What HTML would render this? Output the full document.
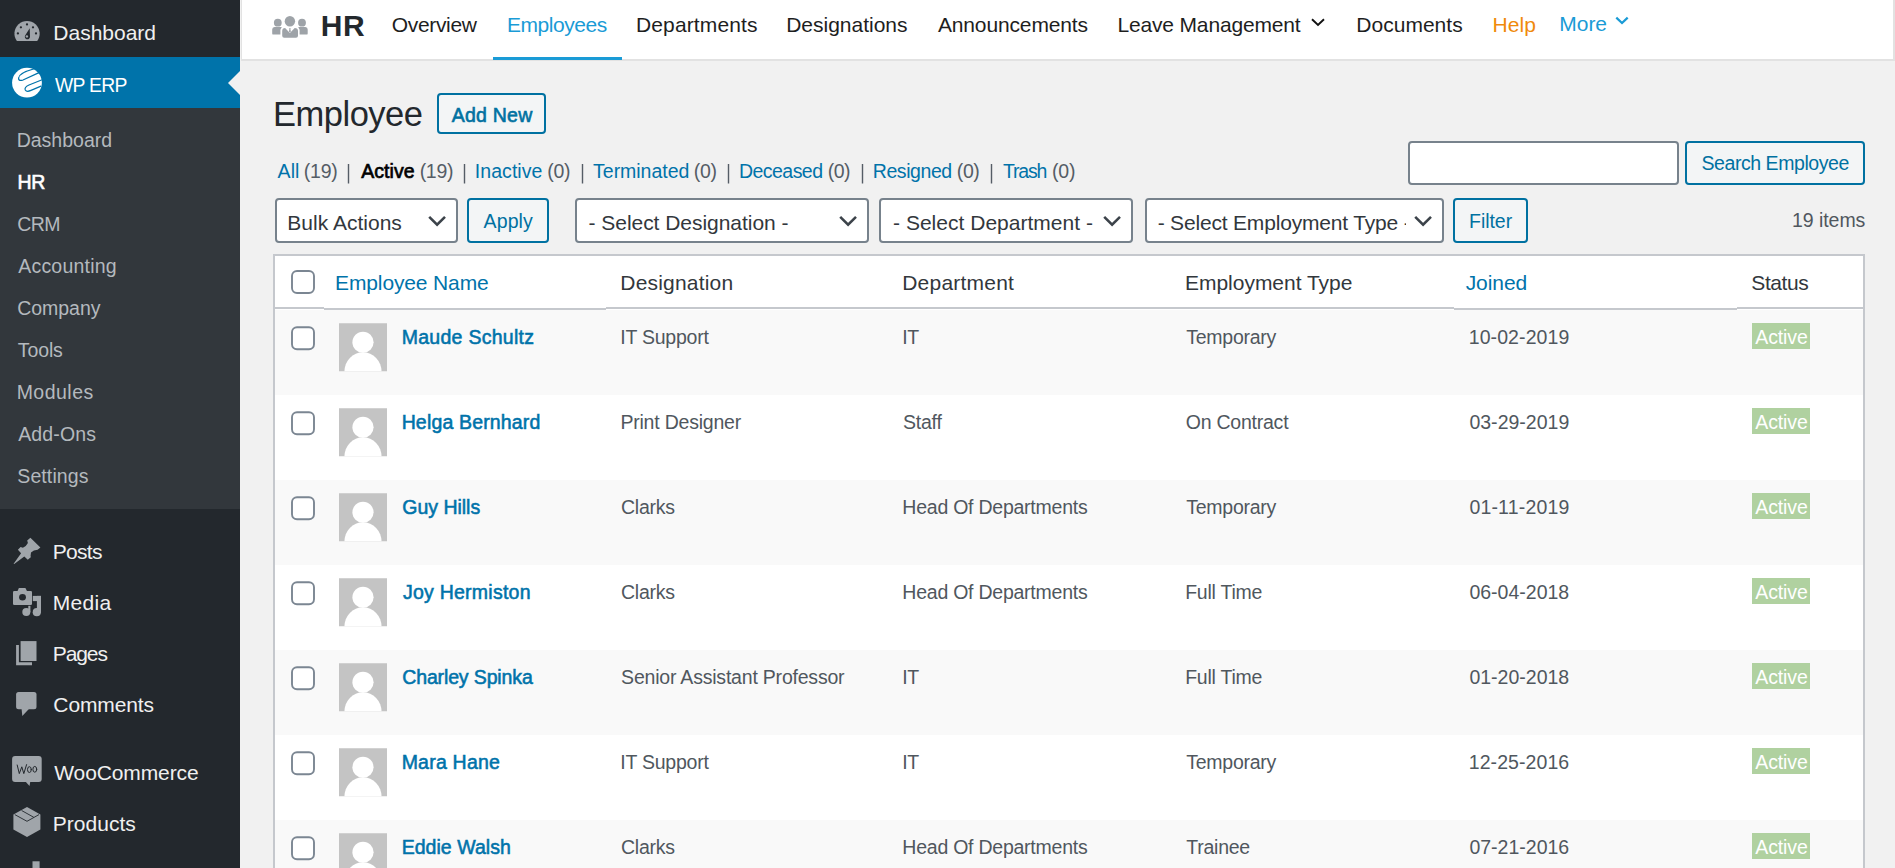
<!DOCTYPE html>
<html><head><meta charset="utf-8"><style>
html,body{margin:0;padding:0}
body{width:1895px;height:868px;position:relative;overflow:hidden;background:#f1f1f1;font-family:"Liberation Sans",sans-serif}
.b{position:absolute}
.t{position:absolute;white-space:nowrap}
svg.ov{position:absolute;left:0;top:0;pointer-events:none}
</style></head><body>
<div class="b" style="left:0px;top:0px;width:240px;height:868px;background:#23282d;"></div>
<div class="b" style="left:0px;top:57px;width:240px;height:51px;background:#0073aa;"></div>
<div class="b" style="left:0px;top:108px;width:240px;height:401px;background:#32373c;"></div>
<div class="t" style="left:53.32px;top:22.42px;font-size:21px;line-height:21px;color:#f0f0f0;letter-spacing:-0.006px;">Dashboard</div>
<div class="t" style="left:54.50px;top:73.52px;font-size:21px;line-height:21px;color:#fff;letter-spacing:-0.754px;transform:scaleX(0.92);transform-origin:0 0;">WP ERP</div>
<div class="t" style="left:16.64px;top:130.79px;font-size:19.5px;line-height:19.5px;color:#b4b9be;letter-spacing:0.009px;">Dashboard</div>
<div class="t" style="left:17.44px;top:172.79px;font-size:19.5px;line-height:19.5px;color:#fff;letter-spacing:-0.343px;-webkit-text-stroke:0.6px #fff;">HR</div>
<div class="t" style="left:17.22px;top:214.79px;font-size:19.5px;line-height:19.5px;color:#b4b9be;letter-spacing:-0.514px;">CRM</div>
<div class="t" style="left:18.20px;top:256.79px;font-size:19.5px;line-height:19.5px;color:#b4b9be;letter-spacing:0.227px;">Accounting</div>
<div class="t" style="left:17.22px;top:298.79px;font-size:19.5px;line-height:19.5px;color:#b4b9be;letter-spacing:-0.031px;">Company</div>
<div class="t" style="left:17.81px;top:340.79px;font-size:19.5px;line-height:19.5px;color:#b4b9be;letter-spacing:-0.115px;">Tools</div>
<div class="t" style="left:16.64px;top:382.79px;font-size:19.5px;line-height:19.5px;color:#b4b9be;letter-spacing:0.489px;">Modules</div>
<div class="t" style="left:18.20px;top:424.79px;font-size:19.5px;line-height:19.5px;color:#b4b9be;letter-spacing:0.159px;">Add-Ons</div>
<div class="t" style="left:17.32px;top:466.79px;font-size:19.5px;line-height:19.5px;color:#b4b9be;letter-spacing:0.095px;">Settings</div>
<div class="t" style="left:52.72px;top:540.72px;font-size:21px;line-height:21px;color:#f0f0f0;letter-spacing:-0.696px;">Posts</div>
<div class="t" style="left:52.72px;top:592.42px;font-size:21px;line-height:21px;color:#f0f0f0;letter-spacing:0.339px;">Media</div>
<div class="t" style="left:52.72px;top:642.92px;font-size:21px;line-height:21px;color:#f0f0f0;letter-spacing:-1.080px;">Pages</div>
<div class="t" style="left:53.35px;top:693.72px;font-size:21px;line-height:21px;color:#f0f0f0;letter-spacing:-0.121px;">Comments</div>
<div class="t" style="left:54.30px;top:762.22px;font-size:21px;line-height:21px;color:#f0f0f0;letter-spacing:-0.118px;">WooCommerce</div>
<div class="t" style="left:52.72px;top:813.02px;font-size:21px;line-height:21px;color:#f0f0f0;letter-spacing:0.039px;">Products</div>
<div class="t" style="left:54.80px;top:864.72px;font-size:21px;line-height:21px;color:#f0f0f0;letter-spacing:-0.416px;">Analytics</div>
<div class="b" style="left:241px;top:0px;width:1654px;height:61px;background:#e2e2e2;"></div>
<div class="b" style="left:242px;top:0px;width:1651px;height:59px;background:#fff;"></div>
<div class="t" style="left:320.85px;top:10.70px;font-size:30px;line-height:30px;color:#23282d;font-weight:700;letter-spacing:0.450px;">HR</div>
<div class="t" style="left:391.75px;top:13.92px;font-size:21px;line-height:21px;color:#1e1e1e;letter-spacing:-0.332px;">Overview</div>
<div class="t" style="left:506.92px;top:13.92px;font-size:21px;line-height:21px;color:#1a9bd6;letter-spacing:-0.441px;">Employees</div>
<div class="t" style="left:636.02px;top:13.92px;font-size:21px;line-height:21px;color:#1e1e1e;letter-spacing:0.129px;">Departments</div>
<div class="t" style="left:786.22px;top:13.92px;font-size:21px;line-height:21px;color:#1e1e1e;letter-spacing:-0.015px;">Designations</div>
<div class="t" style="left:937.90px;top:13.92px;font-size:21px;line-height:21px;color:#1e1e1e;letter-spacing:-0.133px;">Announcements</div>
<div class="t" style="left:1117.52px;top:13.92px;font-size:21px;line-height:21px;color:#1e1e1e;letter-spacing:-0.170px;">Leave Management</div>
<div class="t" style="left:1356.32px;top:13.92px;font-size:21px;line-height:21px;color:#1e1e1e;letter-spacing:0.019px;">Documents</div>
<div class="t" style="left:1492.62px;top:13.92px;font-size:21px;line-height:21px;color:#f08a0c;letter-spacing:0.022px;">Help</div>
<div class="t" style="left:1559.32px;top:13.12px;font-size:21px;line-height:21px;color:#1a9bd6;letter-spacing:-0.050px;">More</div>
<div class="b" style="left:493px;top:57px;width:129px;height:3px;background:#1a9bd6;"></div>
<div class="t" style="left:273.04px;top:96.99px;font-size:34.5px;line-height:34.5px;color:#23282d;letter-spacing:-0.491px;">Employee</div>
<div class="b" style="left:437px;top:93px;width:108.5px;height:40.5px;box-sizing:border-box;border:2px solid #0071a1;border-radius:4px;background:#f3f5f6"></div>
<div class="t" style="left:451.80px;top:105.99px;font-size:19.5px;line-height:19.5px;color:#0071a1;letter-spacing:0.222px;-webkit-text-stroke:0.6px #0071a1;">Add New</div>
<div class="t" style="left:277.60px;top:162.29px;font-size:19.5px;line-height:19.5px;color:#0073aa;letter-spacing:0.061px;">All</div>
<div class="t" style="left:303.83px;top:162.29px;font-size:19.5px;line-height:19.5px;color:#555d66;letter-spacing:-0.224px;">(19)</div>
<div class="t" style="left:361.20px;top:162.29px;font-size:19.5px;line-height:19.5px;color:#000;letter-spacing:0.047px;-webkit-text-stroke:0.65px #000;">Active</div>
<div class="t" style="left:419.63px;top:162.29px;font-size:19.5px;line-height:19.5px;color:#555d66;letter-spacing:-0.291px;">(19)</div>
<div class="t" style="left:474.85px;top:162.29px;font-size:19.5px;line-height:19.5px;color:#0073aa;letter-spacing:0.051px;">Inactive</div>
<div class="t" style="left:547.33px;top:162.29px;font-size:19.5px;line-height:19.5px;color:#555d66;letter-spacing:-0.375px;">(0)</div>
<div class="t" style="left:593.11px;top:162.29px;font-size:19.5px;line-height:19.5px;color:#0073aa;letter-spacing:-0.030px;">Terminated</div>
<div class="t" style="left:693.83px;top:162.29px;font-size:19.5px;line-height:19.5px;color:#555d66;letter-spacing:-0.375px;">(0)</div>
<div class="t" style="left:739.04px;top:162.29px;font-size:19.5px;line-height:19.5px;color:#0073aa;letter-spacing:-0.546px;">Deceased</div>
<div class="t" style="left:827.73px;top:162.29px;font-size:19.5px;line-height:19.5px;color:#555d66;letter-spacing:-0.575px;">(0)</div>
<div class="t" style="left:872.74px;top:162.29px;font-size:19.5px;line-height:19.5px;color:#0073aa;letter-spacing:-0.423px;">Resigned</div>
<div class="t" style="left:956.83px;top:162.29px;font-size:19.5px;line-height:19.5px;color:#555d66;letter-spacing:-0.425px;">(0)</div>
<div class="t" style="left:1003.11px;top:162.29px;font-size:19.5px;line-height:19.5px;color:#0073aa;letter-spacing:-1.246px;">Trash</div>
<div class="t" style="left:1052.03px;top:162.29px;font-size:19.5px;line-height:19.5px;color:#555d66;letter-spacing:-0.225px;">(0)</div>
<div class="b" style="left:1408px;top:140.5px;width:271px;height:44px;box-sizing:border-box;border:2px solid #77828c;border-radius:4px;background:#fff"></div>
<div class="b" style="left:1685px;top:140.5px;width:180px;height:44px;box-sizing:border-box;border:2px solid #0071a1;border-radius:4px;background:#f3f5f6"></div>
<div class="t" style="left:1701.52px;top:153.59px;font-size:19.5px;line-height:19.5px;color:#0071a1;letter-spacing:-0.443px;">Search Employee</div>
<div class="b" style="left:275px;top:198px;width:183px;height:45px;box-sizing:border-box;border:2px solid #77828c;border-radius:4px;background:#fff;overflow:hidden"></div>
<div class="t" style="left:287.32px;top:211.82px;font-size:21px;line-height:21px;color:#32373c;letter-spacing:0.015px;">Bulk Actions</div>
<div class="b" style="left:467px;top:198px;width:82px;height:45px;box-sizing:border-box;border:2px solid #0071a1;border-radius:4px;background:#f3f5f6"></div>
<div class="t" style="left:483.50px;top:212.29px;font-size:19.5px;line-height:19.5px;color:#0071a1;letter-spacing:0.137px;">Apply</div>
<div class="b" style="left:575px;top:198px;width:294px;height:45px;box-sizing:border-box;border:2px solid #77828c;border-radius:4px;background:#fff;overflow:hidden"></div>
<div class="t" style="left:588.55px;top:211.82px;font-size:21px;line-height:21px;color:#32373c;letter-spacing:-0.041px;">- Select Designation -</div>
<div class="b" style="left:879px;top:198px;width:254px;height:45px;box-sizing:border-box;border:2px solid #77828c;border-radius:4px;background:#fff;overflow:hidden"></div>
<div class="t" style="left:893.05px;top:211.82px;font-size:21px;line-height:21px;color:#32373c;letter-spacing:0.014px;">- Select Department -</div>
<div class="b" style="left:1144.5px;top:198px;width:299.5px;height:45px;box-sizing:border-box;border:2px solid #77828c;border-radius:4px;background:#fff;overflow:hidden"></div>
<div class="b" style="left:1144.5px;top:198px;width:261.5px;height:45px;overflow:hidden"><div class="t" style="left:13.15px;top:13.82px;font-size:21px;line-height:21px;color:#32373c;letter-spacing:-0.180px;">- Select Employment Type -</div></div>
<div class="b" style="left:1453px;top:198px;width:75px;height:45px;box-sizing:border-box;border:2px solid #0071a1;border-radius:4px;background:#f3f5f6"></div>
<div class="t" style="left:1469.04px;top:212.29px;font-size:19.5px;line-height:19.5px;color:#0071a1;letter-spacing:-0.047px;">Filter</div>
<div class="t" style="left:1791.94px;top:210.59px;font-size:19.5px;line-height:19.5px;color:#50575e;letter-spacing:-0.038px;">19 items</div>
<div class="b" style="left:273px;top:254px;width:1592px;height:614px;background:#c5c8cd;"></div>
<div class="b" style="left:275px;top:256px;width:1588px;height:612px;background:#fff;"></div>
<div class="b" style="left:275px;top:307px;width:49px;height:2px;background:#c5c8cd;"></div>
<div class="b" style="left:324px;top:308px;width:282px;height:2px;background:#c5c8cd;"></div>
<div class="b" style="left:606px;top:307px;width:848px;height:2px;background:#c5c8cd;"></div>
<div class="b" style="left:1454px;top:308px;width:283px;height:2px;background:#c5c8cd;"></div>
<div class="b" style="left:1737px;top:307px;width:126px;height:2px;background:#c5c8cd;"></div>
<div class="b" style="left:275px;top:310px;width:1588px;height:85px;background:#f9f9f9;"></div>
<div class="b" style="left:275px;top:480px;width:1588px;height:85px;background:#f9f9f9;"></div>
<div class="b" style="left:275px;top:650px;width:1588px;height:85px;background:#f9f9f9;"></div>
<div class="b" style="left:275px;top:820px;width:1588px;height:85px;background:#f9f9f9;"></div>
<div class="t" style="left:335.12px;top:272.22px;font-size:21px;line-height:21px;color:#0073aa;letter-spacing:-0.139px;">Employee Name</div>
<div class="t" style="left:620.32px;top:272.22px;font-size:21px;line-height:21px;color:#32373c;letter-spacing:0.187px;">Designation</div>
<div class="t" style="left:902.22px;top:272.22px;font-size:21px;line-height:21px;color:#32373c;letter-spacing:0.218px;">Department</div>
<div class="t" style="left:1185.02px;top:272.22px;font-size:21px;line-height:21px;color:#32373c;letter-spacing:-0.026px;">Employment Type</div>
<div class="t" style="left:1465.68px;top:271.92px;font-size:21px;line-height:21px;color:#0073aa;letter-spacing:-0.053px;">Joined</div>
<div class="t" style="left:1751.36px;top:271.92px;font-size:21px;line-height:21px;color:#32373c;letter-spacing:-0.431px;">Status</div>
<div class="t" style="left:401.64px;top:328.24px;font-size:19.5px;line-height:19.5px;color:#0073aa;letter-spacing:0.287px;-webkit-text-stroke:0.55px #0073aa;">Maude Schultz</div>
<div class="t" style="left:620.25px;top:328.24px;font-size:19.5px;line-height:19.5px;color:#50575e;letter-spacing:-0.227px;">IT Support</div>
<div class="t" style="left:902.14px;top:328.24px;font-size:19.5px;line-height:19.5px;color:#50575e;letter-spacing:-0.350px;">IT</div>
<div class="t" style="left:1186.31px;top:328.24px;font-size:19.5px;line-height:19.5px;color:#50575e;letter-spacing:-0.264px;">Temporary</div>
<div class="t" style="left:1468.74px;top:328.04px;font-size:19.5px;line-height:19.5px;color:#50575e;letter-spacing:0.089px;">10-02-2019</div>
<div class="b" style="left:1752px;top:323px;width:58px;height:26px;background:#b0d1a0;"></div>
<div class="t" style="left:1755.30px;top:327.54px;font-size:19.5px;line-height:19.5px;color:#fff;letter-spacing:-0.133px;">Active</div>
<div class="t" style="left:401.64px;top:413.24px;font-size:19.5px;line-height:19.5px;color:#0073aa;letter-spacing:0.164px;-webkit-text-stroke:0.55px #0073aa;">Helga Bernhard</div>
<div class="t" style="left:620.44px;top:413.24px;font-size:19.5px;line-height:19.5px;color:#50575e;letter-spacing:-0.215px;">Print Designer</div>
<div class="t" style="left:903.02px;top:413.24px;font-size:19.5px;line-height:19.5px;color:#50575e;letter-spacing:-0.224px;">Staff</div>
<div class="t" style="left:1185.82px;top:413.24px;font-size:19.5px;line-height:19.5px;color:#50575e;letter-spacing:-0.239px;">On Contract</div>
<div class="t" style="left:1469.42px;top:413.04px;font-size:19.5px;line-height:19.5px;color:#50575e;letter-spacing:0.013px;">03-29-2019</div>
<div class="b" style="left:1752px;top:408px;width:58px;height:26px;background:#b0d1a0;"></div>
<div class="t" style="left:1755.30px;top:412.54px;font-size:19.5px;line-height:19.5px;color:#fff;letter-spacing:-0.133px;">Active</div>
<div class="t" style="left:402.22px;top:498.24px;font-size:19.5px;line-height:19.5px;color:#0073aa;letter-spacing:-0.005px;-webkit-text-stroke:0.55px #0073aa;">Guy Hills</div>
<div class="t" style="left:621.02px;top:498.24px;font-size:19.5px;line-height:19.5px;color:#50575e;letter-spacing:-0.247px;">Clarks</div>
<div class="t" style="left:902.34px;top:498.24px;font-size:19.5px;line-height:19.5px;color:#50575e;letter-spacing:-0.239px;">Head Of Departments</div>
<div class="t" style="left:1186.31px;top:498.24px;font-size:19.5px;line-height:19.5px;color:#50575e;letter-spacing:-0.264px;">Temporary</div>
<div class="t" style="left:1469.42px;top:498.04px;font-size:19.5px;line-height:19.5px;color:#50575e;letter-spacing:0.175px;">01-11-2019</div>
<div class="b" style="left:1752px;top:493px;width:58px;height:26px;background:#b0d1a0;"></div>
<div class="t" style="left:1755.30px;top:497.54px;font-size:19.5px;line-height:19.5px;color:#fff;letter-spacing:-0.133px;">Active</div>
<div class="t" style="left:402.91px;top:583.24px;font-size:19.5px;line-height:19.5px;color:#0073aa;letter-spacing:0.246px;-webkit-text-stroke:0.55px #0073aa;">Joy Hermiston</div>
<div class="t" style="left:621.02px;top:583.24px;font-size:19.5px;line-height:19.5px;color:#50575e;letter-spacing:-0.247px;">Clarks</div>
<div class="t" style="left:902.34px;top:583.24px;font-size:19.5px;line-height:19.5px;color:#50575e;letter-spacing:-0.239px;">Head Of Departments</div>
<div class="t" style="left:1185.14px;top:583.24px;font-size:19.5px;line-height:19.5px;color:#50575e;letter-spacing:-0.220px;">Full Time</div>
<div class="t" style="left:1469.42px;top:583.04px;font-size:19.5px;line-height:19.5px;color:#50575e;letter-spacing:0.002px;">06-04-2018</div>
<div class="b" style="left:1752px;top:578px;width:58px;height:26px;background:#b0d1a0;"></div>
<div class="t" style="left:1755.30px;top:582.54px;font-size:19.5px;line-height:19.5px;color:#fff;letter-spacing:-0.133px;">Active</div>
<div class="t" style="left:402.22px;top:668.24px;font-size:19.5px;line-height:19.5px;color:#0073aa;letter-spacing:-0.133px;-webkit-text-stroke:0.55px #0073aa;">Charley Spinka</div>
<div class="t" style="left:621.12px;top:668.24px;font-size:19.5px;line-height:19.5px;color:#50575e;letter-spacing:-0.209px;">Senior Assistant Professor</div>
<div class="t" style="left:902.14px;top:668.24px;font-size:19.5px;line-height:19.5px;color:#50575e;letter-spacing:-0.350px;">IT</div>
<div class="t" style="left:1185.14px;top:668.24px;font-size:19.5px;line-height:19.5px;color:#50575e;letter-spacing:-0.220px;">Full Time</div>
<div class="t" style="left:1469.42px;top:668.04px;font-size:19.5px;line-height:19.5px;color:#50575e;letter-spacing:0.002px;">01-20-2018</div>
<div class="b" style="left:1752px;top:663px;width:58px;height:26px;background:#b0d1a0;"></div>
<div class="t" style="left:1755.30px;top:667.54px;font-size:19.5px;line-height:19.5px;color:#fff;letter-spacing:-0.133px;">Active</div>
<div class="t" style="left:401.64px;top:753.24px;font-size:19.5px;line-height:19.5px;color:#0073aa;letter-spacing:0.226px;-webkit-text-stroke:0.55px #0073aa;">Mara Hane</div>
<div class="t" style="left:620.25px;top:753.24px;font-size:19.5px;line-height:19.5px;color:#50575e;letter-spacing:-0.227px;">IT Support</div>
<div class="t" style="left:902.14px;top:753.24px;font-size:19.5px;line-height:19.5px;color:#50575e;letter-spacing:-0.350px;">IT</div>
<div class="t" style="left:1186.31px;top:753.24px;font-size:19.5px;line-height:19.5px;color:#50575e;letter-spacing:-0.264px;">Temporary</div>
<div class="t" style="left:1468.74px;top:753.04px;font-size:19.5px;line-height:19.5px;color:#50575e;letter-spacing:0.078px;">12-25-2016</div>
<div class="b" style="left:1752px;top:748px;width:58px;height:26px;background:#b0d1a0;"></div>
<div class="t" style="left:1755.30px;top:752.54px;font-size:19.5px;line-height:19.5px;color:#fff;letter-spacing:-0.133px;">Active</div>
<div class="t" style="left:401.64px;top:838.24px;font-size:19.5px;line-height:19.5px;color:#0073aa;letter-spacing:0.042px;-webkit-text-stroke:0.55px #0073aa;">Eddie Walsh</div>
<div class="t" style="left:621.02px;top:838.24px;font-size:19.5px;line-height:19.5px;color:#50575e;letter-spacing:-0.247px;">Clarks</div>
<div class="t" style="left:902.34px;top:838.24px;font-size:19.5px;line-height:19.5px;color:#50575e;letter-spacing:-0.239px;">Head Of Departments</div>
<div class="t" style="left:1186.31px;top:838.24px;font-size:19.5px;line-height:19.5px;color:#50575e;letter-spacing:-0.246px;">Trainee</div>
<div class="t" style="left:1469.42px;top:838.04px;font-size:19.5px;line-height:19.5px;color:#50575e;letter-spacing:0.002px;">07-21-2016</div>
<div class="b" style="left:1752px;top:833px;width:58px;height:26px;background:#b0d1a0;"></div>
<div class="t" style="left:1755.30px;top:837.54px;font-size:19.5px;line-height:19.5px;color:#fff;letter-spacing:-0.133px;">Active</div>
<svg class="ov" width="1895" height="868" viewBox="0 0 1895 868">
<polygon points="240,71 228,83 240,95" fill="#f1f1f1"/>
<g fill="#a0a5aa"><path d="M16.9,41 A12.6,12.6 0 1 1 37.2,41 Z"/></g>
<g fill="#23282d"><circle cx="27" cy="24.4" r="1.15"/><circle cx="20.9" cy="27.3" r="1.15"/><circle cx="33" cy="27.3" r="1.15"/><circle cx="17.9" cy="33.4" r="1.15"/><circle cx="36" cy="33.4" r="1.15"/>
<path d="M29.7,28.3 L30,37 A2.6,2.6 0 1 1 25.3,35.2 Z"/></g><circle cx="26.9" cy="36.4" r="1.2" fill="#a0a5aa"/>
<circle cx="27" cy="82.7" r="14.9" fill="#fff"/>
<g fill="none" stroke="#0073aa" stroke-width="1.25" stroke-linecap="round">
<path d="M33.5,69 C26,71 19,74.5 18.6,78 C18.3,80.5 20.5,81 23,80 L39,72.6"/>
<path d="M41.5,80 L29,85 C25.5,86.5 24.5,88.5 25.3,90 C26.2,91.6 29,91.3 31,90.4 L41,86.2"/>
</g>
<path fill="#a0a5aa" d="M30.4,537.7 L40.4,547.5 L37.6,549.8 Q33.5,550 31,552.6 L30.5,556.3 L31,557.1 L27.8,559.8 L24.3,556.6 L14.2,563.9 Q13.4,564.2 13.8,563.5 L21.1,553.2 L17.9,549.8 L20.6,546.9 L22.9,547.7 Q26.3,546.4 27.9,543 L27.2,540.5 Z"/>
<g fill="#a0a5aa"><rect x="13" y="591" width="19" height="14" rx="1.3"/><path d="M17.3,591.5 L18.9,588 H25.4 L27.2,591.5 Z"/>
<ellipse cx="22.5" cy="597.3" rx="3.4" ry="3.3" fill="#23282d"/>
<rect x="32.8" y="595.9" width="8.2" height="5.2"/><rect x="36.9" y="595.9" width="4.1" height="16.5"/><rect x="28.3" y="605.8" width="2.1" height="6.5"/>
<circle cx="26.3" cy="612" r="4"/><circle cx="36.8" cy="612.2" r="4.1"/></g>
<g fill="#a0a5aa"><path d="M16.1,645 H18.9 V662.2 H32 V665.2 H16.1 Z"/><rect x="20.6" y="641.1" width="15.9" height="19.9"/></g>
<g fill="#a0a5aa"><rect x="16.1" y="691.9" width="20.4" height="17.3" rx="2.5"/><polygon points="21.5,708 29.8,708 22.3,715.9"/></g>
<g fill="#a0a5aa"><rect x="12.1" y="756.1" width="29.6" height="25.9" rx="3"/><polygon points="25,781 30.4,781 29.5,786"/></g>
<g fill="none" stroke="#23282d" stroke-width="1" stroke-linejoin="round" stroke-linecap="round"><polyline points="17.2,765 19.3,773.6 21.8,766.8 23.8,773.6 26.6,764.6"/><ellipse cx="29.4" cy="769.6" rx="1.9" ry="2.9"/><ellipse cx="34.8" cy="769.3" rx="1.9" ry="2.9"/></g>
<polygon fill="#a0a5aa" points="27,806.9 40.4,814.6 40.4,829.6 27,837.1 13.4,829.6 13.4,814.6"/>
<g stroke="#23282d" stroke-width="0.9" fill="none"><polyline points="14.8,814.6 27,821.3 39,814.6"/><line x1="21.6" y1="810.5" x2="33.8" y2="817.3"/></g>
<rect x="32.5" y="861.3" width="7.1" height="10" fill="#a0a5aa"/>
<g fill="#9ea3a8"><circle cx="289.9" cy="21.3" r="5.2"/><circle cx="277.8" cy="22.7" r="3.9"/><circle cx="302" cy="22.7" r="3.9"/>
<path d="M282.2,35.7 V31 Q282.2,28.1 285.1,28.1 L289.9,32.9 L294.7,28.1 Q298,28.1 298,31 V35.7 Q298,37.7 296,37.7 H284.2 Q282.2,37.7 282.2,35.7 Z"/><path d="M289,28.2 H290.8 L290.4,29.2 L290.9,31.5 L289.9,32.4 L288.9,31.5 L289.4,29.2 Z"/>
<path d="M272.2,33.4 V29.5 Q272.2,27.2 274.5,27.1 L281.8,27.1 L280.4,29.8 V34.6 H273.4 Q272.2,34.6 272.2,33.4 Z"/>
<path d="M307.7,33.4 V29.5 Q307.7,27.2 305.4,27.1 L298.2,27.1 L299.6,29.8 V34.6 H306.5 Q307.7,34.6 307.7,33.4 Z"/></g>
<polyline points="1312,19.2 1318,25 1324,19.2" fill="none" stroke="#111" stroke-width="1.9"/>
<polyline points="1616.3,17.6 1622,23 1627.7,17.6" fill="none" stroke="#1a9bd6" stroke-width="2.2"/>
<rect x="347.8" y="164" width="1.4" height="19.5" fill="#555d66"/>
<rect x="463.8" y="164" width="1.4" height="19.5" fill="#555d66"/>
<rect x="581.8" y="164" width="1.4" height="19.5" fill="#555d66"/>
<rect x="727.8" y="164" width="1.4" height="19.5" fill="#555d66"/>
<rect x="861.8" y="164" width="1.4" height="19.5" fill="#555d66"/>
<rect x="990.8" y="164" width="1.4" height="19.5" fill="#555d66"/>
<polyline points="429.2,216.9 437.1,224.6 445.0,216.9" fill="none" stroke="#3c434a" stroke-width="2.6"/>
<polyline points="840.2,216.9 848.1,224.6 856.0,216.9" fill="none" stroke="#3c434a" stroke-width="2.6"/>
<polyline points="1104.2,216.9 1112.1,224.6 1120.0,216.9" fill="none" stroke="#3c434a" stroke-width="2.6"/>
<polyline points="1415.2,216.9 1423.1,224.6 1431.0,216.9" fill="none" stroke="#3c434a" stroke-width="2.6"/>
<rect x="292" y="271" width="22" height="22" rx="5" fill="#fff" stroke="#7b8692" stroke-width="1.9"/>
<rect x="292" y="327.25" width="22" height="22" rx="5" fill="#fff" stroke="#7b8692" stroke-width="1.9"/>
<g><rect x="339" y="323.25" width="48" height="48" fill="#c4c4c4"/>
<circle cx="363" cy="342.25" r="10.6" fill="#fff"/>
<clipPath id="av0"><rect x="339" y="323.25" width="48" height="48"/></clipPath>
<ellipse clip-path="url(#av0)" cx="363" cy="371.75" rx="18.6" ry="19.6" fill="#fff"/></g>
<rect x="292" y="412.25" width="22" height="22" rx="5" fill="#fff" stroke="#7b8692" stroke-width="1.9"/>
<g><rect x="339" y="408.25" width="48" height="48" fill="#c4c4c4"/>
<circle cx="363" cy="427.25" r="10.6" fill="#fff"/>
<clipPath id="av1"><rect x="339" y="408.25" width="48" height="48"/></clipPath>
<ellipse clip-path="url(#av1)" cx="363" cy="456.75" rx="18.6" ry="19.6" fill="#fff"/></g>
<rect x="292" y="497.25" width="22" height="22" rx="5" fill="#fff" stroke="#7b8692" stroke-width="1.9"/>
<g><rect x="339" y="493.25" width="48" height="48" fill="#c4c4c4"/>
<circle cx="363" cy="512.25" r="10.6" fill="#fff"/>
<clipPath id="av2"><rect x="339" y="493.25" width="48" height="48"/></clipPath>
<ellipse clip-path="url(#av2)" cx="363" cy="541.75" rx="18.6" ry="19.6" fill="#fff"/></g>
<rect x="292" y="582.25" width="22" height="22" rx="5" fill="#fff" stroke="#7b8692" stroke-width="1.9"/>
<g><rect x="339" y="578.25" width="48" height="48" fill="#c4c4c4"/>
<circle cx="363" cy="597.25" r="10.6" fill="#fff"/>
<clipPath id="av3"><rect x="339" y="578.25" width="48" height="48"/></clipPath>
<ellipse clip-path="url(#av3)" cx="363" cy="626.75" rx="18.6" ry="19.6" fill="#fff"/></g>
<rect x="292" y="667.25" width="22" height="22" rx="5" fill="#fff" stroke="#7b8692" stroke-width="1.9"/>
<g><rect x="339" y="663.25" width="48" height="48" fill="#c4c4c4"/>
<circle cx="363" cy="682.25" r="10.6" fill="#fff"/>
<clipPath id="av4"><rect x="339" y="663.25" width="48" height="48"/></clipPath>
<ellipse clip-path="url(#av4)" cx="363" cy="711.75" rx="18.6" ry="19.6" fill="#fff"/></g>
<rect x="292" y="752.25" width="22" height="22" rx="5" fill="#fff" stroke="#7b8692" stroke-width="1.9"/>
<g><rect x="339" y="748.25" width="48" height="48" fill="#c4c4c4"/>
<circle cx="363" cy="767.25" r="10.6" fill="#fff"/>
<clipPath id="av5"><rect x="339" y="748.25" width="48" height="48"/></clipPath>
<ellipse clip-path="url(#av5)" cx="363" cy="796.75" rx="18.6" ry="19.6" fill="#fff"/></g>
<rect x="292" y="837.25" width="22" height="22" rx="5" fill="#fff" stroke="#7b8692" stroke-width="1.9"/>
<g><rect x="339" y="833.25" width="48" height="48" fill="#c4c4c4"/>
<circle cx="363" cy="852.25" r="10.6" fill="#fff"/>
<clipPath id="av6"><rect x="339" y="833.25" width="48" height="48"/></clipPath>
<ellipse clip-path="url(#av6)" cx="363" cy="881.75" rx="18.6" ry="19.6" fill="#fff"/></g>
</svg>
</body></html>
